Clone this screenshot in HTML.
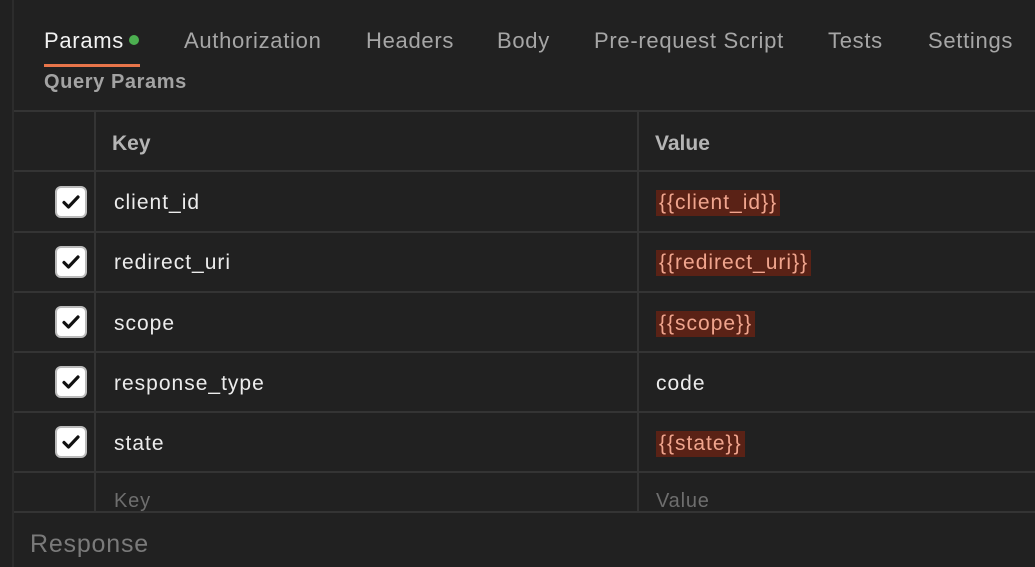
<!DOCTYPE html>
<html><head><style>
*{margin:0;padding:0;box-sizing:border-box}
body{width:1035px;height:567px;background:#212121;font-family:"Liberation Sans",sans-serif;position:relative;overflow:hidden;color:#e6e6e6}
.a{position:absolute;white-space:nowrap}
.tab{top:28px;font-size:22px;color:#a6a6a6;letter-spacing:0.7px}
.h{position:absolute;left:14px;right:0;height:2px;background:#343434}
.v{position:absolute;width:2px;background:#343434}
.cb{position:absolute;left:55px;width:32px;height:32px;background:#fff;border-radius:6px;border:2px solid #bbb}
.cb svg{position:absolute;left:4px;top:4px}
.t{font-size:21px;color:#ececec;letter-spacing:1px}
.var{background:#5a2216;color:#f0a58e;padding:1px 3px;font-size:21px;letter-spacing:1px}
</style></head><body>
<div class="v" style="left:12px;top:0;height:567px;background:#2c2c2c"></div>
<div class="a tab" style="left:44px;color:#f2f2f2">Params</div>
<div class="a" style="left:129px;top:35px;width:10px;height:10px;border-radius:50%;background:#4caf50"></div>
<div class="a" style="left:44px;top:64px;width:96px;height:3px;background:#e8754a"></div>
<div class="a tab" style="left:184px">Authorization</div>
<div class="a tab" style="left:366px">Headers</div>
<div class="a tab" style="left:497px">Body</div>
<div class="a tab" style="left:594px">Pre-request Script</div>
<div class="a tab" style="left:828px">Tests</div>
<div class="a tab" style="left:928px">Settings</div>
<div class="a" style="left:44px;top:71px;font-size:20px;font-weight:bold;color:#a3a3a3;letter-spacing:0.6px">Query Params</div>

<div class="h" style="top:110px"></div>
<div class="h" style="top:170px"></div>
<div class="h" style="top:231px"></div>
<div class="h" style="top:291px"></div>
<div class="h" style="top:351px"></div>
<div class="h" style="top:411px"></div>
<div class="h" style="top:471px"></div>
<div class="h" style="top:511px"></div>
<div class="v" style="left:94px;top:110px;height:402px"></div>
<div class="v" style="left:637px;top:110px;height:402px"></div>

<div class="a" style="left:112px;top:132px;font-size:21px;font-weight:bold;color:#b5b5b5">Key</div>
<div class="a" style="left:655px;top:132px;font-size:21px;font-weight:bold;color:#b5b5b5">Value</div>

<div class="cb" style="top:186px"><svg width="20" height="20" viewBox="0 0 20 20"><path d="M3 10.5l4.5 4.5L17 5" stroke="#111" stroke-width="3.2" fill="none" stroke-linecap="round" stroke-linejoin="round"/></svg></div>
<div class="cb" style="top:246px"><svg width="20" height="20" viewBox="0 0 20 20"><path d="M3 10.5l4.5 4.5L17 5" stroke="#111" stroke-width="3.2" fill="none" stroke-linecap="round" stroke-linejoin="round"/></svg></div>
<div class="cb" style="top:306px"><svg width="20" height="20" viewBox="0 0 20 20"><path d="M3 10.5l4.5 4.5L17 5" stroke="#111" stroke-width="3.2" fill="none" stroke-linecap="round" stroke-linejoin="round"/></svg></div>
<div class="cb" style="top:366px"><svg width="20" height="20" viewBox="0 0 20 20"><path d="M3 10.5l4.5 4.5L17 5" stroke="#111" stroke-width="3.2" fill="none" stroke-linecap="round" stroke-linejoin="round"/></svg></div>
<div class="cb" style="top:426px"><svg width="20" height="20" viewBox="0 0 20 20"><path d="M3 10.5l4.5 4.5L17 5" stroke="#111" stroke-width="3.2" fill="none" stroke-linecap="round" stroke-linejoin="round"/></svg></div>

<div class="a t" style="left:114px;top:191px">client_id</div>
<div class="a t" style="left:114px;top:251px">redirect_uri</div>
<div class="a t" style="left:114px;top:312px">scope</div>
<div class="a t" style="left:114px;top:372px">response_type</div>
<div class="a t" style="left:114px;top:432px">state</div>

<div class="a var" style="left:656px;top:190px">{{client_id}}</div>
<div class="a var" style="left:656px;top:250px">{{redirect_uri}}</div>
<div class="a var" style="left:656px;top:311px">{{scope}}</div>
<div class="a t" style="left:656px;top:372px">code</div>
<div class="a var" style="left:656px;top:431px">{{state}}</div>

<div class="a" style="left:114px;top:490px;font-size:20px;color:#6e6e6e;letter-spacing:0.8px">Key</div>
<div class="a" style="left:656px;top:490px;font-size:20px;color:#6e6e6e;letter-spacing:0.8px">Value</div>
<div class="a" style="left:30px;top:530px;font-size:25px;color:#7a7a7a;letter-spacing:0.8px">Response</div>
</body></html>
